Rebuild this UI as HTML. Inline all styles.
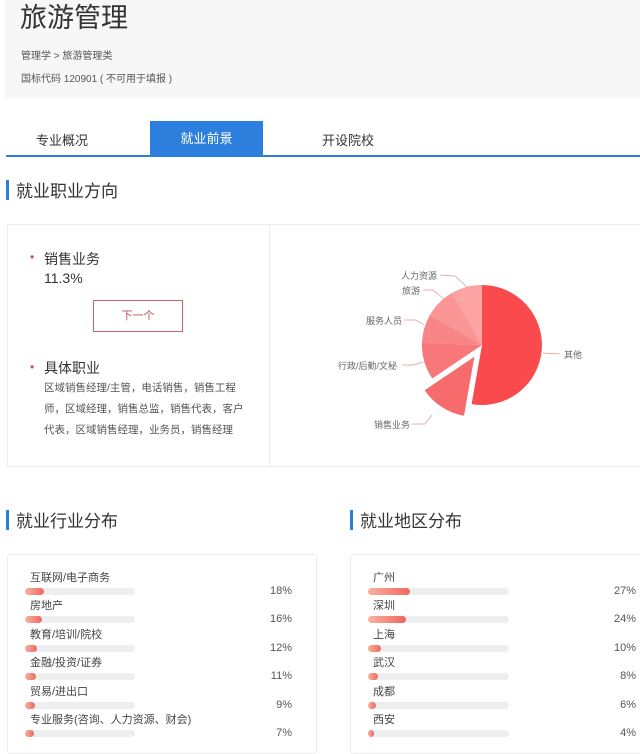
<!DOCTYPE html>
<html><head><meta charset="utf-8"><style>
*{margin:0;padding:0;box-sizing:border-box}
body{width:640px;height:739px;overflow:hidden;background:#fff;font-family:"Liberation Sans","Noto Sans CJK SC",sans-serif;color:#333;position:relative}
.a{position:absolute;white-space:nowrap}
.hdr{position:absolute;left:5px;top:0;width:635px;height:98px;background:#f7f7f7}
.bar{position:absolute;height:7px;border-radius:4px;background:#eeeeee}
.fill{position:absolute;height:7px;border-radius:4px;background:linear-gradient(90deg,#f9b3a0,#f0665e)}
.lab{font-size:11px;color:#444}
.pct{font-size:11px;color:#555;text-align:right;width:40px}
</style></head><body>
<div class="hdr"></div>
<div class="a" style="left:20px;top:-4px;font-size:27px;color:#333">旅游管理</div>
<div class="a" style="left:21px;top:47px;font-size:10px;color:#555">管理学 &gt; 旅游管理类</div>
<div class="a" style="left:21px;top:70px;font-size:10px;color:#555">国标代码 120901 ( 不可用于填报 )</div>

<div class="a" style="left:36px;top:130px;font-size:13px;color:#333">专业概况</div>
<div class="a" style="left:150px;top:121px;width:113px;height:35px;background:#2d7fde;color:#fff;font-size:13px;text-align:center;line-height:35px">就业前景</div>
<div class="a" style="left:322px;top:130px;font-size:13px;color:#333">开设院校</div>
<div class="a" style="left:6px;top:155px;width:634px;height:2px;background:#2d7fde"></div>

<div class="a" style="left:6px;top:180px;width:3px;height:20px;background:#2d7fde"></div>
<div class="a" style="left:16px;top:177px;font-size:17px;color:#333">就业职业方向</div>

<div class="a" style="left:7px;top:224px;width:640px;height:243px;border:1px solid #ececec"></div>
<div class="a" style="left:269px;top:225px;width:1px;height:241px;background:#ececec"></div>
<div class="a" style="left:30px;top:250px;font-size:12px;color:#c0504d">•</div>
<div class="a" style="left:44px;top:249px;font-size:14px;color:#333">销售业务</div>
<div class="a" style="left:44px;top:270px;font-size:14px;color:#333">11.3%</div>
<div class="a" style="left:93px;top:300px;width:90px;height:32px;border:1px solid #c9616b;font-size:11px;color:#c0504d;text-align:center;line-height:30px">下一个</div>
<div class="a" style="left:30px;top:360px;font-size:12px;color:#c0504d">•</div>
<div class="a" style="left:44px;top:358px;font-size:14px;color:#333">具体职业</div>
<div class="a" style="left:44px;top:378px;font-size:10.5px;color:#555;line-height:21px;white-space:normal;width:205px">区域销售经理/主管，电话销售，销售工程师，区域经理，销售总监，销售代表，客户代表，区域销售经理，业务员，销售经理</div>

<svg class="a" style="left:0;top:0" width="640" height="739">
<path d="M482,345 L482,285 A60,60 0 1 1 471.6,404.1 Z" fill="#fa4a4e"/>
<path d="M474.4,356.7 L464,415.8 A60,60 0 0 1 424.7,390.2 Z" fill="#f86b6c"/>
<path d="M482,345 L432.3,378.5 A60,60 0 0 1 422,342.9 Z" fill="#f87778"/>
<path d="M482,345 L422,342.9 A60,60 0 0 1 430,315 Z" fill="#f98687"/>
<path d="M482,345 L430,315 A60,60 0 0 1 452,293 Z" fill="#fa9495"/>
<path d="M482,345 L452,293 A60,60 0 0 1 482,285 Z" fill="#fca3a3"/>
<g stroke="#dc9a9a" fill="none" stroke-width="0.7">
<path d="M440,275 L455,276 L468,288"/>
<path d="M423,290 L433,290 L444,299"/>
<path d="M404,320 L416,320 L424,325"/>
<path d="M402,365 L414,365 L423,362"/>
<path d="M412,424 L425,424 L432,415"/>
<path d="M543,353 L560,354"/>
</g>
<g font-size="9" fill="#666" font-family="Liberation Sans,Noto Sans CJK SC,sans-serif">
<text x="401" y="279">人力资源</text>
<text x="402" y="294">旅游</text>
<text x="366" y="324">服务人员</text>
<text x="338" y="369">行政/后勤/文秘</text>
<text x="374" y="428">销售业务</text>
<text x="564" y="358">其他</text>
</g>
</svg>

<div class="a" style="left:6px;top:510px;width:3px;height:20px;background:#2d7fde"></div>
<div class="a" style="left:16px;top:507px;font-size:17px;color:#333">就业行业分布</div>
<div class="a" style="left:350px;top:510px;width:3px;height:20px;background:#2d7fde"></div>
<div class="a" style="left:360px;top:507px;font-size:17px;color:#333">就业地区分布</div>

<div class="a" style="left:7px;top:554px;width:310px;height:200px;border:1px solid #ececec;border-radius:3px"></div>
<div class="a" style="left:350px;top:554px;width:300px;height:200px;border:1px solid #ececec;border-radius:3px"></div>

<div class="a lab" style="left:30px;top:569px">互联网/电子商务</div><div class="bar" style="left:25px;top:588px;width:110px"></div><div class="fill" style="left:25px;top:588px;width:19px"></div><div class="a pct" style="left:252px;top:585px">18%</div>
<div class="a lab" style="left:30px;top:597px">房地产</div><div class="bar" style="left:25px;top:616px;width:110px"></div><div class="fill" style="left:25px;top:616px;width:17px"></div><div class="a pct" style="left:252px;top:613px">16%</div>
<div class="a lab" style="left:30px;top:626px">教育/培训/院校</div><div class="bar" style="left:25px;top:645px;width:110px"></div><div class="fill" style="left:25px;top:645px;width:12px"></div><div class="a pct" style="left:252px;top:642px">12%</div>
<div class="a lab" style="left:30px;top:654px">金融/投资/证券</div><div class="bar" style="left:25px;top:673px;width:110px"></div><div class="fill" style="left:25px;top:673px;width:11px"></div><div class="a pct" style="left:252px;top:670px">11%</div>
<div class="a lab" style="left:30px;top:683px">贸易/进出口</div><div class="bar" style="left:25px;top:702px;width:110px"></div><div class="fill" style="left:25px;top:702px;width:10px"></div><div class="a pct" style="left:252px;top:699px">9%</div>
<div class="a lab" style="left:30px;top:711px">专业服务(咨询、人力资源、财会)</div><div class="bar" style="left:25px;top:730px;width:110px"></div><div class="fill" style="left:25px;top:730px;width:9px"></div><div class="a pct" style="left:252px;top:727px">7%</div>
<div class="a lab" style="left:373px;top:569px">广州</div><div class="bar" style="left:368px;top:588px;width:141px"></div><div class="fill" style="left:368px;top:588px;width:42px"></div><div class="a pct" style="left:596px;top:585px">27%</div>
<div class="a lab" style="left:373px;top:597px">深圳</div><div class="bar" style="left:368px;top:616px;width:141px"></div><div class="fill" style="left:368px;top:616px;width:38px"></div><div class="a pct" style="left:596px;top:613px">24%</div>
<div class="a lab" style="left:373px;top:626px">上海</div><div class="bar" style="left:368px;top:645px;width:141px"></div><div class="fill" style="left:368px;top:645px;width:13px"></div><div class="a pct" style="left:596px;top:642px">10%</div>
<div class="a lab" style="left:373px;top:654px">武汉</div><div class="bar" style="left:368px;top:673px;width:141px"></div><div class="fill" style="left:368px;top:673px;width:10px"></div><div class="a pct" style="left:596px;top:670px">8%</div>
<div class="a lab" style="left:373px;top:683px">成都</div><div class="bar" style="left:368px;top:702px;width:141px"></div><div class="fill" style="left:368px;top:702px;width:8px"></div><div class="a pct" style="left:596px;top:699px">6%</div>
<div class="a lab" style="left:373px;top:711px">西安</div><div class="bar" style="left:368px;top:730px;width:141px"></div><div class="fill" style="left:368px;top:730px;width:6px"></div><div class="a pct" style="left:596px;top:727px">4%</div>
</body></html>
